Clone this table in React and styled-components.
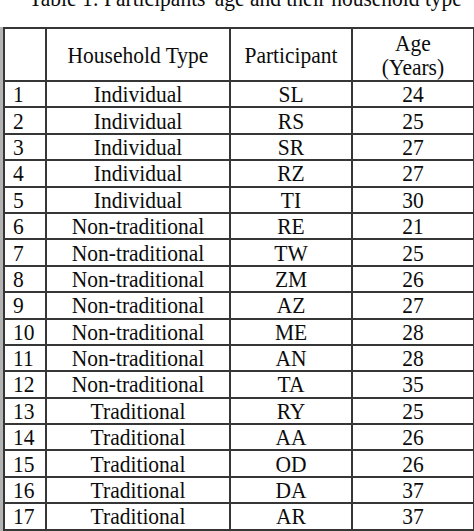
import React from "react";
import styled, {createGlobalStyle} from "styled-components";

const rows = [
    [1, "Individual", "SL", 24],
    [2, "Individual", "RS", 25],
    [3, "Individual", "SR", 27],
    [4, "Individual", "RZ", 27],
    [5, "Individual", "TI", 30],
    [6, "Non-traditional", "RE", 21],
    [7, "Non-traditional", "TW", 25],
    [8, "Non-traditional", "ZM", 26],
    [9, "Non-traditional", "AZ", 27],
    [10, "Non-traditional", "ME", 28],
    [11, "Non-traditional", "AN", 28],
    [12, "Non-traditional", "TA", 35],
    [13, "Traditional", "RY", 25],
    [14, "Traditional", "AA", 26],
    [15, "Traditional", "OD", 26],
    [16, "Traditional", "DA", 37],
    [17, "Traditional", "AR", 37],
];

const App = () => {
    return (
        <>
            <GlobalStyle/>
            <Page>
                <Caption><Text>Table 1: Participants' age and their household type</Text></Caption>
                <Table>
                    <colgroup>
                        <col style={{width: 42}}/>
                        <col style={{width: 184}}/>
                        <col style={{width: 122}}/>
                        <col style={{width: 122}}/>
                    </colgroup>
                    <thead>
                    <HeadRow>
                        <HeadCell/>
                        <HeadCell><Text>Household Type</Text></HeadCell>
                        <HeadCell><Text>Participant</Text></HeadCell>
                        <HeadCell><Text>Age<br/>(Years)</Text></HeadCell>
                    </HeadRow>
                    </thead>
                    <tbody>
                    {rows.map(([no, type, who, age]) => (
                        <BodyRow key={no}>
                            <Cell $left><Text>{no}</Text></Cell>
                            <Cell><Text>{type}</Text></Cell>
                            <Cell><Text>{who}</Text></Cell>
                            <Cell><Text>{age}</Text></Cell>
                        </BodyRow>
                    ))}
                    </tbody>
                </Table>
            </Page>
        </>
    );
};

export default App;

const GlobalStyle = createGlobalStyle`
    html, body {
        margin: 0;
        padding: 0;
        background: #fff;
    }
    body {
        font-family: "Liberation Serif", "Times New Roman", serif;
        color: #0c0c0c;
        overflow: hidden;
    }
`;

const Page = styled.div`
    width: 474px;
    height: 531px;
    padding-left: 3px;
    box-sizing: border-box;
    overflow: hidden;
`;

const Caption = styled.div`
    margin-top: -14px;
    height: 41px;
    padding-left: 14px;
    font-size: 21.5px;
    line-height: 24px;
    text-align: center;
    white-space: nowrap;
`;

// the scan is slightly taller than wide
const Text = styled.span`
    display: inline-block;
    transform: scaleY(1.12);
`;

const Table = styled.table`
    width: 470px;
    border-collapse: collapse;
    table-layout: fixed;
    border: 2px solid #363636;
    box-shadow: -3px 0 0 0 #b4b4b4, 2px 0 0 0 #b4b4b4, 0 2px 0 0 #b4b4b4;
    font-size: 21.5px;
`;

const HeadRow = styled.tr`
    height: 53px;
`;

const BodyRow = styled.tr`
    height: 26.4px;
`;

const HeadCell = styled.th`
    border: 2px solid #363636;
    padding: 0;
    font-weight: normal;
    line-height: 22px;
    text-align: center;
    vertical-align: middle;
`;

const Cell = styled.td`
    border: 2px solid #363636;
    padding: ${p => (p.$left ? "0 0 0 8px" : "0")};
    line-height: 22px;
    text-align: ${p => (p.$left ? "left" : "center")};
    vertical-align: middle;
    white-space: nowrap;
`;
